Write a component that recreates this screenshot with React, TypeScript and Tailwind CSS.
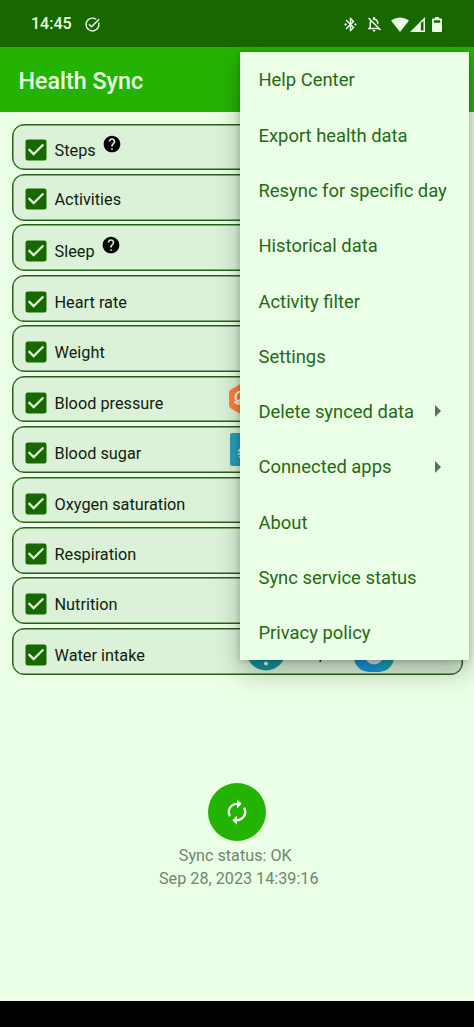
import React from 'react'
import {
  MdAutorenew,
  MdBluetoothConnected,
  MdCheckBox,
  MdHelp,
  MdOutlineNotificationsOff,
  MdTaskAlt,
} from 'react-icons/md'

interface DataType {
  label: string
  help?: boolean
  padding?: string
  icons?: React.ReactNode
}

interface MenuItem {
  label: string
  submenu?: boolean
}

const PressureIcon = () => (
  <svg className="ml-auto mr-[200px] mt-[4px] shrink-0" width="34" height="36" viewBox="0 0 34 36">
    <path d="M15 1.5q2-1 4 0l12 7q2 1 2 3v13q0 2-2 3l-12 7q-2 1-4 0l-12-7q-2-1-2-3v-13q0-2 2-3z" fill="#ff813f" />
    <path d="M13 11c-6-1-7 8-3 9q2 1 2-1M7 21q3 3 6 1" fill="none" stroke="#ebffe6" strokeWidth="2" strokeLinecap="round" />
  </svg>
)

const SugarIcon = () => (
  <svg className="ml-auto mr-[200px] mt-[6px] shrink-0" width="32" height="33" viewBox="0 0 32 33">
    <rect width="32" height="33" rx="2" fill="#2a9fba" />
    <path d="M16 7l-6 8q-4 4-1 9l2 2h10q5-6 1-11z" fill="#ebffe6" />
    <path d="M7 20l4-1v3l-3 1" fill="none" stroke="#2a9fba" strokeWidth="1.5" />
  </svg>
)

const WaterIcons = () => (
  <div className="ml-auto mr-[68px] mt-[2px] flex items-start">
    <svg width="38" height="40" viewBox="0 0 38 40">
      <circle cx="19" cy="20" r="19.500" fill="#15959f" />
      <path d="M19 12v12" stroke="#ebffe6" strokeWidth="4" />
      <circle cx="19" cy="32.500" r="2" fill="#ebffe6" />
    </svg>
    <span className="ml-[34px] mt-[12px] w-[4px] text-base leading-[24px]">,</span>
    <svg className="ml-[31px]" width="40" height="41" viewBox="0 0 40 41">
      <defs>
        <linearGradient id="water" x1="0" x2="1">
          <stop offset=".5" stopColor="#1b94dd" />
          <stop offset="1" stopColor="#18aaa0" />
        </linearGradient>
      </defs>
      <rect width="40" height="41" rx="15" fill="url(#water)" />
      <ellipse cx="20" cy="25" rx="9" ry="8.500" fill="#cfe4e4" />
    </svg>
  </div>
)

const dataTypes: DataType[] = [
  { label: 'Steps', help: true, padding: 'pt-[14px]' },
  { label: 'Activities', padding: 'pt-[13px]' },
  { label: 'Sleep', help: true, padding: 'pt-[15px]' },
  { label: 'Heart rate' },
  { label: 'Weight' },
  { label: 'Blood pressure', icons: <PressureIcon /> },
  { label: 'Blood sugar', icons: <SugarIcon /> },
  { label: 'Oxygen saturation' },
  { label: 'Respiration' },
  { label: 'Nutrition' },
  { label: 'Water intake', icons: <WaterIcons /> },
]

const menuItems: MenuItem[] = [
  { label: 'Help Center' },
  { label: 'Export health data' },
  { label: 'Resync for specific day' },
  { label: 'Historical data' },
  { label: 'Activity filter' },
  { label: 'Settings' },
  { label: 'Delete synced data', submenu: true },
  { label: 'Connected apps', submenu: true },
  { label: 'About' },
  { label: 'Sync service status' },
  { label: 'Privacy policy' },
]

const StatusBar = () => (
  <div className="flex h-[47px] items-center bg-[#176800] pl-[31px] pr-[32px] pt-[1px] text-[#ebffe6]">
    <span className="w-[53px] text-[16px] font-medium">14:45</span>
    <MdTaskAlt size={17} />
    <div className="ml-auto flex items-center">
      <MdBluetoothConnected size={17} />
      <MdOutlineNotificationsOff className="ml-[6px]" size={18} />
      <svg className="ml-[8px]" width="18" height="15" viewBox="0 0 18 15" fill="currentColor">
        <path d="M0 3.5Q9-2.5 18 3.5L9 15z" />
      </svg>
      <svg className="ml-[1px]" width="15" height="15" viewBox="0 0 15 15" fill="currentColor">
        <path fillRule="evenodd" d="M15 0v15H0zM10.800 6v7.500h2.700V4z" />
      </svg>
      <svg className="ml-[7px]" width="10" height="15" viewBox="0 0 10 15" fill="currentColor">
        <path
          fillRule="evenodd"
          d="M3 0h4v1.500h2q1 0 1 1V14q0 1-1 1H1q-1 0-1-1V2.500q0-1 1-1h2zM1.800 3.200v2.600h6.400V3.200z"
        />
      </svg>
    </div>
  </div>
)

const DataRow: React.FC<{ item: DataType }> = ({ item }) => (
  <div className="flex h-[46.700px] shrink-0 overflow-hidden rounded-[12px] border border-[#285f1c] bg-[#dbf2d8] shadow-[inset_0_0_0_0.5px_#285f1c]">
    <div className={`flex items-start pl-[10.500px] ${item.padding ?? 'pt-[15px]'}`}>
      <MdCheckBox className="-ml-[1px] -mt-[3px] shrink-0 text-[#176800]" size={28} />
      <span className="ml-[4.500px] mt-[2px] whitespace-nowrap text-[16.300px] leading-[20px] text-[#101c0d]">
        {item.label}
      </span>
      {item.help && <MdHelp className="-mt-[5px] ml-[6px] text-black" size={20} />}
    </div>
    {item.icons}
  </div>
)

const OverflowMenu = () => (
  <div className="absolute left-[240px] top-[52px] w-[229px] bg-[#ebffe6] shadow-[0_12px_24px_rgba(0,0,0,0.26),0_1px_6px_rgba(0,0,0,0.2)]">
    {menuItems.map((item) => (
      <div
        key={item.label}
        className="flex h-[55.300px] items-center justify-between pl-[18.500px] pr-[28px] pt-[1px] text-[18.400px] text-[#246915]"
      >
        <span className="whitespace-nowrap">{item.label}</span>
        {item.submenu && (
          <svg className="mb-[1px]" width="6" height="12" viewBox="0 0 6 12" fill="#59734f">
            <path d="M0 0l6 6-6 6z" />
          </svg>
        )}
      </div>
    ))}
  </div>
)

export default function App() {
  return (
    <div className="relative flex h-[1027px] w-[474px] flex-col overflow-hidden bg-[#ebffe6] font-['Roboto',sans-serif]">
      <StatusBar />
      <header className="flex h-[65px] shrink-0 items-center bg-[#25b303] pl-[18.500px] pt-[3px] text-[23.300px] font-medium text-[#ebffe6]">
        Health Sync
      </header>

      <main className="flex flex-1 flex-col pl-[11.500px] pr-[11px] pt-[11.500px]">
        <div className="flex flex-col gap-[3.750px]">
          {dataTypes.map((item) => (
            <DataRow key={item.label} item={item} />
          ))}
        </div>

        {/* Sync button and last sync result */}
        <div className="mt-[108px] flex flex-col items-center pr-[1px]">
          <button className="flex size-[58px] items-center justify-center rounded-full bg-[#25b303] text-[#ebffe6]">
            <MdAutorenew size={28} />
          </button>
          <div className="mt-[3px] text-center text-[16.200px] leading-[23px] text-[#71856d]">
            <p className="pr-[3px]">Sync status: OK</p>
            <p className="pl-[4px]">Sep 28, 2023 14:39:16</p>
          </div>
        </div>
      </main>

      <footer className="h-[26px] shrink-0 bg-black" />
      <OverflowMenu />
    </div>
  )
}
